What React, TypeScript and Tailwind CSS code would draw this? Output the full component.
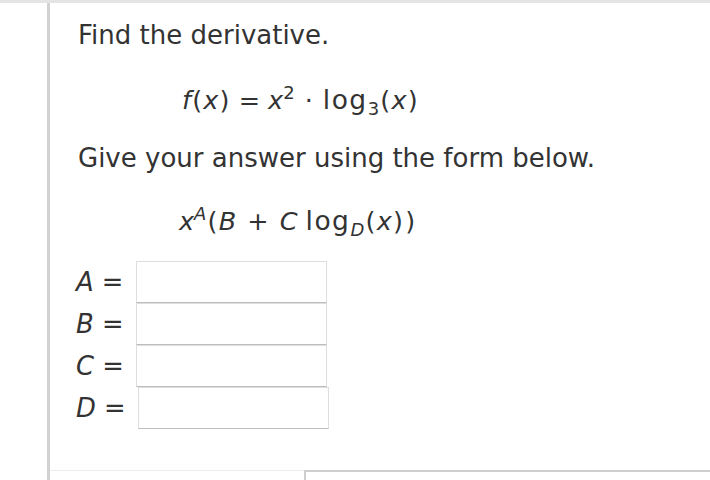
import React from "react";

const I = ({ children }: { children: React.ReactNode }) => (
  <span className="italic">{children}</span>
);

const P = ({ c }: { c: string }) => <span className="px-[1.2px]">{c}</span>;

function Row({ label, w }: { label: string; w: string }) {
  return (
    <div className="flex items-center">
      <span className={`text-[25.8px] leading-[30px] whitespace-nowrap inline-block ${w}`}>
        <I>{label}</I> =
      </span>
      <div className="ml-[13px] w-[191px] h-[42px] bg-white border border-[#dedede] border-b-[#bdbdbd]" />
    </div>
  );
}

export default function App() {
  return (
    <div
      className="w-[710px] h-[480px] bg-white flex flex-col overflow-hidden text-[#333]"
      style={{ fontFamily: '"DejaVu Sans", Verdana, sans-serif' }}
    >
      <div className="h-[3px] bg-[#e4e4e4] shrink-0" />
      <div className="flex flex-1">
        <div className="w-[47px] shrink-0" />
        <div className="w-[3px] bg-[#d2d2d2] shrink-0" />
        <div className="flex-1 flex flex-col">
          <div className="flex-1 pl-[28px] pt-[17px]">
            <div className="text-[26px] leading-[30px]">Find the derivative.</div>
            <div className="mt-[35px] ml-[104px] text-[25.5px] leading-[30px] whitespace-nowrap">
              <I>f</I>
              <P c="(" />
              <I>x</I>
              <P c=")" />
              <span className="mx-[8px]">=</span>
              <I>x</I>
              <span className="text-[18px] leading-[0] relative top-[-10px]">2</span>
              <span className="mx-[10px]">·</span>
              <span className="text-[26.5px] leading-[0] tracking-[1.5px]">log</span>
              <span className="text-[18px] leading-[0] relative top-[6px]">3</span>
              <P c="(" />
              <I>x</I>
              <P c=")" />
            </div>
            <div className="mt-[28px] text-[26px] leading-[30px]">Give your answer using the form below.</div>
            <div className="mt-[33px] ml-[101px] text-[25.5px] leading-[30px] whitespace-nowrap">
              <I>x</I>
              <span className="text-[18px] leading-[0] relative top-[-10px]">
                <I>A</I>
              </span>
              <P c="(" />
              <I>B</I>
              <span className="mx-[11px]">+</span>
              <I>C</I>{" "}
              <span className="text-[26.5px] leading-[0] tracking-[1.5px]">log</span>
              <span className="text-[18px] leading-[0] relative top-[6px]">
                <I>D</I>
              </span>
              <P c="(" />
              <I>x</I>
              <P c=")" />
              <P c=")" />
            </div>
            <div className="mt-[25px] -ml-[2px] flex flex-col">
              <Row label="A" w="w-[47px]" />
              <Row label="B" w="w-[47px]" />
              <Row label="C" w="w-[47px]" />
              <Row label="D" w="w-[49px]" />
            </div>
          </div>
          <div className="h-[10px] flex shrink-0">
            <div className="w-[254px] border-t border-[#ececec]" />
            <div className="flex-1 border-t-2 border-l-2 border-[#cfcfcf]" />
          </div>
        </div>
      </div>
    </div>
  );
}
